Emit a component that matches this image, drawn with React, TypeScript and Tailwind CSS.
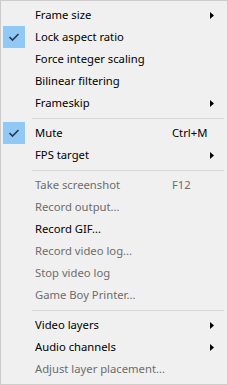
type Item =
  | { sep: true }
  | { sep?: false; label: string; checked?: boolean; disabled?: boolean; shortcut?: string; sub?: boolean };

const items: Item[] = [
  { label: 'Frame size', sub: true },
  { label: 'Lock aspect ratio', checked: true },
  { label: 'Force integer scaling' },
  { label: 'Bilinear filtering' },
  { label: 'Frameskip', sub: true },
  { sep: true },
  { label: 'Mute', checked: true, shortcut: 'Ctrl+M' },
  { label: 'FPS target', sub: true },
  { sep: true },
  { label: 'Take screenshot', disabled: true, shortcut: 'F12' },
  { label: 'Record output...', disabled: true },
  { label: 'Record GIF...' },
  { label: 'Record video log...', disabled: true },
  { label: 'Stop video log', disabled: true },
  { label: 'Game Boy Printer...', disabled: true },
  { sep: true },
  { label: 'Video layers', sub: true },
  { label: 'Audio channels', sub: true },
  { label: 'Adjust layer placement...', disabled: true },
];

function Check() {
  return (
    <div className="flex h-[22px] w-[22px] items-center justify-center bg-[#90c8f6]">
      <svg width="12" height="10" viewBox="0 0 12 10">
        <polyline points="1.5,5 4.5,8 10.5,2" fill="none" stroke="#2b3a48" strokeWidth="1.6" />
      </svg>
    </div>
  );
}

function Arrow() {
  return (
    <svg width="4" height="7" viewBox="0 0 4 7">
      <polygon points="0,0 4,3.5 0,7" fill="#000" />
    </svg>
  );
}

export default function App() {
  return (
    <div className="h-[385px] w-[228px] overflow-hidden border border-[#cccccc] bg-[#f0f0f0] py-[3px] pl-[2px] pr-[2px] font-['Segoe_UI','Noto_Sans',sans-serif] text-[11.25px]">
      {items.map((it, i) =>
        it.sep ? (
          <div key={i} className="flex h-[8px] items-center pl-[29px] pr-[1px]">
            <div className="h-px w-full bg-[#d7d7d7]" />
          </div>
        ) : (
          <div
            key={i}
            className={`flex h-[22px] items-center whitespace-nowrap ${it.disabled ? 'text-[#6d6d6d]' : 'text-black'}`}
          >
            <div className="w-[32px] shrink-0">{it.checked && <Check />}</div>
            <div className="w-[137px] shrink-0 pb-px leading-none">{it.label}</div>
            <div className="w-[38px] shrink-0 pb-px leading-none">{it.shortcut}</div>
            <div className="flex w-[6px] shrink-0 items-center">{it.sub && <Arrow />}</div>
          </div>
        )
      )}
    </div>
  );
}
